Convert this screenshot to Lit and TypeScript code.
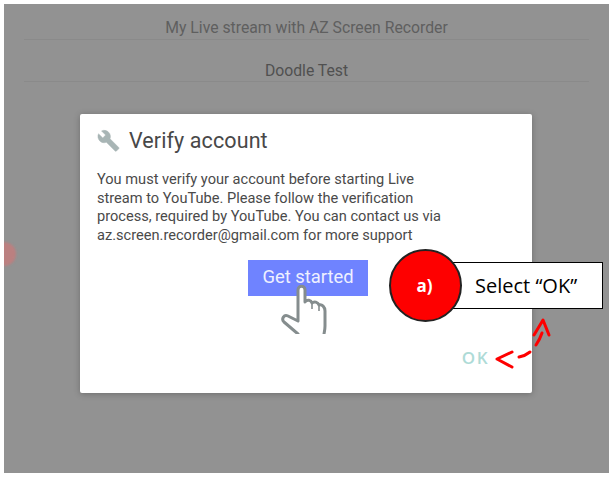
import { LitElement, html, css } from "lit";
import { customElement } from "lit/decorators.js";

@customElement("app-root")
export class AppRoot extends LitElement {
  static styles = css`
    :host { display: block; width: 613px; height: 477px; background: #fff; box-sizing: border-box; padding: 4px; font-family: Roboto, sans-serif; overflow: hidden; }
    .screen { position: relative; width: 605px; height: 469px; background: #929292; overflow: hidden; }
    .list { display: flex; flex-direction: column; padding: 0 20px; }
    .row { height: 42px; box-sizing: border-box; padding-top: 19px; border-bottom: 1px solid #8a8a8a; text-align: center; font-size: 15.75px; line-height: 24px; color: #5f5f5f; }
    .row:first-child { height: 36px; padding-top: 12px; }
    .row.dark { color: #505050; }
    .dot { position: absolute; left: -12px; top: 238px; width: 24px; height: 24px; border-radius: 50%; background: #bb8080; filter: blur(1px); }
    .dialog { position: absolute; left: 76px; top: 110px; width: 452px; height: 279px; box-sizing: border-box; background: #fff; border-radius: 2px; box-shadow: 0 1px 6px rgba(0,0,0,.25); padding: 11px 17px 0; display: flex; flex-direction: column; }
    .head { display: flex; align-items: center; gap: 9px; height: 30px; }
    .head svg { width: 23px; height: 23px; flex: none; }
    .title { font-size: 21.5px; color: #484848; letter-spacing: .1px; }
    .body { margin: 15px 0 0; font-size: 14.6px; line-height: 18.6px; color: #4a4a4a; }
    .btn { position: relative; align-self: flex-start; margin: 16px 0 0 151px; width: 120px; height: 36px; background: #6f83ff; color: #eef0ff; font-size: 18.4px; line-height: 34px; display: flex; align-items: flex-start; justify-content: center; }
    .hand { position: absolute; left: 33px; top: 24px; width: 50px; height: 50px; }
    .ok { position: absolute; right: 43px; bottom: 24px; font-size: 17px; letter-spacing: 1.5px; color: #aedbd7; font-family: "Open Sans", sans-serif; font-weight: 600; line-height: 22px; }
    .callout { position: absolute; left: 443px; top: 258px; width: 156px; height: 47px; box-sizing: border-box; background: #fff; border: 1.5px solid #000; display: flex; align-items: center; padding-left: 27px; font-family: "Open Sans", sans-serif; font-size: 20px; color: #000; }
    .badge { position: absolute; left: 385px; top: 245px; width: 73px; height: 73px; box-sizing: border-box; border-radius: 50%; background: #fe0000; border: 2px solid #222; color: #fff; font-family: "Open Sans", sans-serif; font-weight: 700; font-size: 17px; display: flex; align-items: center; justify-content: center; padding-right: 2px; }
    .arrow { position: absolute; left: 480px; top: 305px; width: 70px; height: 70px; }
  `;

  render() {
    return html`
      <div class="screen">
        <div class="list">
          <div class="row">My Live stream with AZ Screen Recorder</div>
          <div class="row dark">Doodle Test</div>
        </div>
        <div class="dot"></div>
        <div class="dialog">
          <div class="head">
            <svg viewBox="0 0 24 24"><path fill="#a8b5b5" stroke="#a8b5b5" stroke-width=".5" stroke-linejoin="round" d="M22.7 19.3 13.6 10.2c.9-2.300.4-5-1.500-6.900C10.100 1.300 7.100.9 4.700 2l4.300 4.300-3 3L1.600 5C.4 7.400.9 10.400 2.900 12.400c1.900 1.900 4.600 2.400 6.900 1.500l9.100 9.100c.4.400 1 .4 1.400 0l2.300-2.300c.5-.4.500-1.100.1-1.400z"/></svg>
            <div class="title">Verify account</div>
          </div>
          <p class="body">You must verify your account before starting Live<br>stream to YouTube. Please follow the verification<br>process, required by YouTube. You can contact us via<br>az.screen.recorder@gmail.com for more support</p>
          <div class="btn">Get started
            <svg class="hand" viewBox="0 0 50 50">
              <path fill="#fff" stroke="#858d8e" stroke-width="3" stroke-linejoin="round" stroke-linecap="round" d="M17 50 3 38c-3-3 0-8 4-6l10 5V6c0-5 7-5 7 0v12c2-3 6-2 7 1 2-2 6-1 7 2 3-1 6 2 6 6v15c0 3-.5 5-1 8"/>
              <path fill="none" stroke="#858d8e" stroke-width="1.6" d="M31 19v6M38 21v6"/>
            </svg>
          </div>
          <div class="ok">OK</div>
        </div>
        <svg class="arrow" viewBox="0 0 70 70" fill="none" stroke="#fe0000" stroke-width="3" stroke-linecap="round" stroke-linejoin="round">
          <path d="M28 43 13 50 28 58"/>
          <path d="M35 48Q41 47 46 43"/>
          <path d="M52 36Q56 30 58 24"/>
          <path d="M50 26 59 11 65 26"/>
        </svg>
        <div class="callout">Select “OK”</div>
        <div class="badge">a)</div>
      </div>
    `;
  }
}
